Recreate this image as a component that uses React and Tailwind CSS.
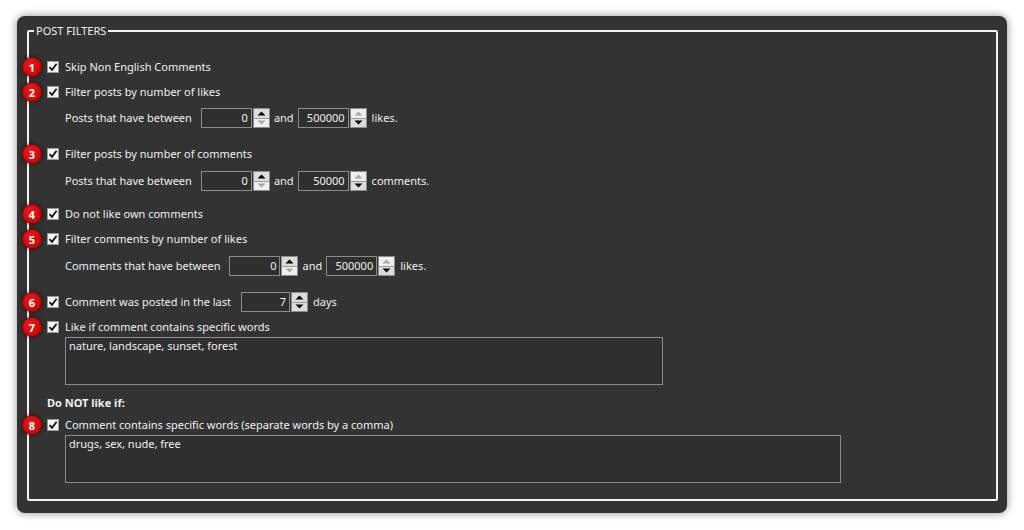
import React from "react";

const Badge = ({ n }) => (
  <span className="absolute left-[-25px] top-1/2 -translate-y-1/2 w-[20px] h-[20px] rounded-full bg-[radial-gradient(circle_at_40%_35%,#e81a1a,#c00000)] border border-[#9a0000] shadow-[0_0_4px_rgba(0,0,0,0.6)] flex items-center justify-center text-white text-[11px] font-bold leading-none">
    {n}
  </span>
);

const Check = () => (
  <span className="w-[12px] h-[12px] bg-[#f5f5f5] border border-[#9a9a9a] flex items-center justify-center shrink-0">
    <svg width="10" height="10" viewBox="0 0 10 10">
      <path d="M1.5 5.2 L4 7.8 L8.6 1.8" fill="none" stroke="#111" strokeWidth="1.8" />
    </svg>
  </span>
);

const CheckRow = ({ n, label }) => (
  <div className="relative flex items-center h-[20px] gap-[6px]">
    <Badge n={n} />
    <Check />
    <span>{label}</span>
  </div>
);

const Arrow = ({ up, on }) => (
  <svg width="9" height="5" viewBox="0 0 9 5">
    <path d={up ? "M0.5 4.5 L4.5 0.5 L8.5 4.5 Z" : "M0.5 0.5 L4.5 4.5 L8.5 0.5 Z"} fill={on ? "#000" : "#a8a8a8"} />
  </svg>
);

const Spin = ({ value, w = "w-[51px]", upOn = true, downOn = true }) => (
  <div className="flex items-center h-[20px]">
    <div className={`${w} h-[20px] border border-[#8c8c8c] bg-[#2f2f2f] text-right pr-[3px] leading-[18px]`}>
      {value}
    </div>
    <div className="w-[17px] h-[20px] flex flex-col border border-[#8c8c8c] ml-[1px]">
      <div className={`flex-1 flex items-center justify-center ${upOn ? "bg-[#dcdcdc]" : "bg-[#efefef]"}`}>
        <Arrow up on={upOn} />
      </div>
      <div className={`flex-1 flex items-center justify-center border-t border-[#9a9a9a] ${downOn ? "bg-[#dcdcdc]" : "bg-[#efefef]"}`}>
        <Arrow on={downOn} />
      </div>
    </div>
  </div>
);

const Range = ({ text, a, b, unit, mt }) => (
  <div className={`flex items-center h-[22px] pl-[18px] ${mt}`}>
    <span className="mr-[9px]">{text}</span>
    <Spin value={a} downOn={false} />
    <span className="mx-[4px]">and</span>
    <Spin value={b} upOn={false} />
    <span className="ml-[5px]">{unit}</span>
  </div>
);

export default function App() {
  return (
    <div
      className="w-[1024px] h-[530px] bg-white pt-[16px] pl-[17px] text-[#f0f0f0] text-[11px]"
      style={{ fontFamily: '"Noto Sans", "Open Sans", sans-serif' }}
    >
      <div className="w-[990px] h-[497px] bg-[#333333] rounded-[8px] shadow-[0_0_8px_rgba(0,0,0,0.45)] pt-[8px] pl-[10px] pr-[9px] pb-[12px]">
        <fieldset className="h-full border-2 border-[#f2f2f2] rounded-[2px] pl-[18px] pt-[19px]">
          <legend className="ml-[-13px] px-[2px] text-[11px] leading-[14px] text-[#f0f0f0]">POST FILTERS</legend>

          <CheckRow n="1" label="Skip Non English Comments" />
          <div className="mt-[5px]"><CheckRow n="2" label="Filter posts by number of likes" /></div>
          <Range text="Posts that have between" a="0" b="500000" unit="likes." mt="mt-[5px]" />

          <div className="mt-[15px]"><CheckRow n="3" label="Filter posts by number of comments" /></div>
          <Range text="Posts that have between" a="0" b="50000" unit="comments." mt="mt-[6px]" />

          <div className="mt-[12px]"><CheckRow n="4" label="Do not like own comments" /></div>
          <div className="mt-[5px]"><CheckRow n="5" label="Filter comments by number of likes" /></div>
          <Range text="Comments that have between" a="0" b="500000" unit="likes." mt="mt-[6px]" />

          <div className="relative flex items-center h-[22px] gap-[6px] mt-[14px]">
            <Badge n="6" />
            <Check />
            <span className="mr-[4px]">Comment was posted in the last</span>
            <Spin value="7" w="w-[49px]" />
            <span className="ml-[-1px]">days</span>
          </div>

          <div className="mt-[4px]"><CheckRow n="7" label="Like if comment contains specific words" /></div>
          <div className="ml-[18px] w-[598px] h-[48px] border border-[#8c8c8c] bg-[#2f2f2f] px-[3px] leading-[16px]">
            nature, landscape, sunset, forest
          </div>

          <div className="mt-[10px] h-[16px] leading-[16px] font-bold">Do NOT like if:</div>

          <div className="mt-[4px]"><CheckRow n="8" label="Comment contains specific words (separate words by a comma)" /></div>
          <div className="ml-[18px] w-[776px] h-[48px] border border-[#8c8c8c] bg-[#2f2f2f] px-[3px] leading-[16px]">
            drugs, sex, nude, free
          </div>
        </fieldset>
      </div>
    </div>
  );
}
